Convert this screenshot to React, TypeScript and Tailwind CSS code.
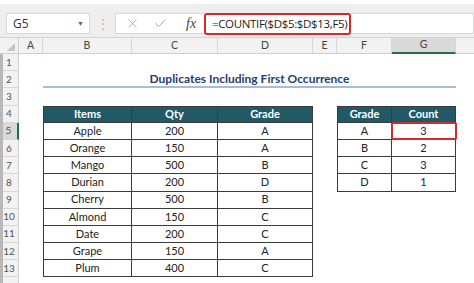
import React from "react";
import { X, Check } from "lucide-react";

const items = [
  ["Apple", "200", "A"],
  ["Orange", "150", "A"],
  ["Mango", "500", "B"],
  ["Durian", "200", "D"],
  ["Cherry", "500", "B"],
  ["Almond", "150", "C"],
  ["Date", "200", "C"],
  ["Grape", "150", "A"],
  ["Plum", "400", "C"],
];

const counts = [
  ["A", "3"],
  ["B", "2"],
  ["C", "3"],
  ["D", "1"],
];

const cols = ["A", "B", "C", "D", "E", "F", "G"];

const cell = "h-[17.2px] flex items-center justify-center text-[11px] text-[#222]";
const head = "h-[17.2px] flex items-center justify-center text-[11px] font-bold text-white bg-[#215967]";

const App: React.FC = () => {
  const rows = Array.from({ length: 14 }, (_, i) => i + 1);

  const renderRow = (r: number) => {
    // columns: A, B, C, D, E, F, G, rest
    let b: React.ReactNode = <div />;
    let c: React.ReactNode = <div />;
    let d: React.ReactNode = <div />;
    let f: React.ReactNode = <div />;
    let g: React.ReactNode = <div />;

    if (r === 4) {
      b = <div className={`${head} border border-[#3b3b3b]`}>Items</div>;
      c = <div className={`${head} border-y border-r border-[#3b3b3b]`}>Qty</div>;
      d = <div className={`${head} border-y border-r border-[#3b3b3b]`}>Grade</div>;
      f = <div className={`${head} border border-[#3b3b3b]`}>Grade</div>;
      g = <div className={`${head} border-y border-r border-[#3b3b3b]`}>Count</div>;
    } else if (r >= 5 && r <= 13) {
      const it = items[r - 5];
      b = <div className={`${cell} border-x border-b border-[#3b3b3b]`}>{it[0]}</div>;
      c = <div className={`${cell} border-r border-b border-[#3b3b3b]`}>{it[1]}</div>;
      d = <div className={`${cell} border-r border-b border-[#3b3b3b]`}>{it[2]}</div>;
      if (r <= 8) {
        const ct = counts[r - 5];
        f = <div className={`${cell} border-x border-b border-[#3b3b3b]`}>{ct[0]}</div>;
        g = (
          <div className={`${cell} relative border-r border-b border-[#3b3b3b]`}>
            {ct[1]}
            {r === 5 && (
              <div className="absolute -left-[1px] -top-[1px] -right-[2px] -bottom-[1px] border-2 border-[#d42a2a] rounded-[2px]" />
            )}
          </div>
        );
      }
    }

    return (
      <div key={r} className="contents">
        <div
          className={`h-[17.2px] flex items-center justify-center text-[10px] text-[#555] border-b border-[#d6d6d6] ${
            r === 5 ? "bg-[#d9d9d9] border-r-2 border-r-[#217346]" : "bg-[#f2f2f2] border-r border-r-[#cfcfcf]"
          }`}
        >
          {r < 14 ? r : ""}
        </div>
        <div />
        {r === 2 ? (
          <div className="col-span-6 h-[17.2px] flex items-center justify-center border-b-2 border-[#a9bcd6] text-[12px] font-bold text-[#1f3d6e]">
            Duplicates Including First Occurrence
          </div>
        ) : (
          <>
            {b}
            {c}
            {d}
            <div />
            {f}
            {g}
          </>
        )}
        <div />
      </div>
    );
  };

  return (
    <div className="w-[474px] h-[283px] overflow-hidden bg-white font-['Lato',sans-serif] relative">
      <div className="h-[4px] bg-white" />
      {/* formula bar */}
      <div className="h-[34px] bg-[#eeeeee] flex items-start pt-[9px] pl-[6px] gap-0 border-b border-[#d4d4d4]">
        <div className="w-[84px] h-[21px] bg-white border border-[#d8d8d8] flex items-center justify-between pl-[6px] pr-[5px]">
          <span className="text-[12px] text-[#333] font-['Open_Sans',sans-serif]">G5</span>
          <span className="text-[7px] text-[#666]">▼</span>
        </div>
        <div className="w-[25px] h-[21px] flex items-center justify-center text-[#b5b5b5] text-[12px]">⋮</div>
        <div className="h-[21px] flex-1 bg-white border border-[#d8d8d8] flex items-center">
          <div className="w-[90px] h-full flex items-center pl-[9px] gap-[13px]">
            <X size={15} strokeWidth={1.2} className="text-[#9a9a9a]" />
            <Check size={15} strokeWidth={1.4} className="text-[#9a9a9a]" />
            <span className="ml-[5px] italic text-[14px] text-[#444] font-['Liberation_Serif',serif]">fx</span>
          </div>
          <div className="h-[22px] w-[147px] -ml-[2px] border-2 border-[#d42a2a] rounded-[3px] flex items-center pl-[6px] text-[11.5px] text-[#222] font-['Open_Sans',sans-serif] tracking-[-0.35px] whitespace-nowrap">
            =COUNTIF($D$5:$D$13,F5)
          </div>
        </div>
      </div>
      {/* sheet grid */}
      <div className="grid grid-cols-[19px_24px_89px_86px_95px_24px_55px_64px_1fr]">
        {/* column headers */}
        <div className="h-[16px] bg-[#f2f2f2] border-b border-r border-[#cfcfcf] flex items-end justify-end pr-[3px] pb-[2px]">
          <div className="w-0 h-0 border-l-[8px] border-l-transparent border-b-[8px] border-b-[#c4c4c4]" />
        </div>
        {cols.map((c) => (
          <div
            key={c}
            className={`h-[16px] flex items-center justify-center text-[10.5px] text-[#444] border-r border-[#d6d6d6] ${
              c === "G" ? "bg-[#d9d9d9] border-b-2 border-b-[#217346]" : "bg-[#f2f2f2] border-b border-b-[#cfcfcf]"
            }`}
          >
            {c}
          </div>
        ))}
        <div className="h-[16px] bg-[#f2f2f2] border-b border-[#cfcfcf]" />
        {rows.map(renderRow)}
      </div>
      <div className="absolute left-0 top-[54px] w-[3px] h-[229px] bg-[#b8b8b8]" />
    </div>
  );
};

export default App;
